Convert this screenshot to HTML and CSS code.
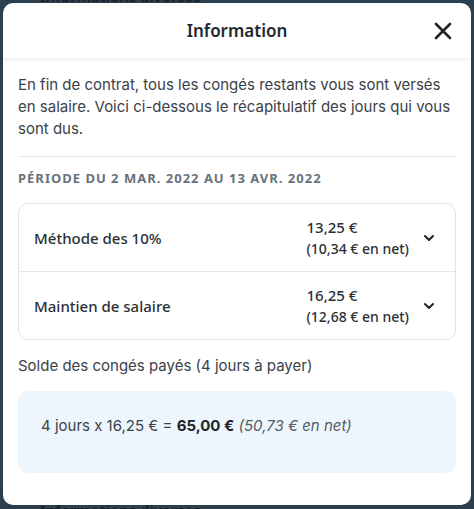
FILE: index.html
```html
<!DOCTYPE html>
<html lang="fr">
<head>
<meta charset="utf-8">
<link rel="stylesheet" href="styles.css">
</head>
<body>
<div class="backdrop">
  <div class="bg-top">Informations diverses</div>
  <div class="bg-bottom">Informations diverses</div>
</div>
<div class="modal">
  <header class="modal-header">
    <h1 class="title">Information</h1>
    <button class="close" aria-label="Fermer">
      <svg width="18" height="18" viewBox="0 0 18 18"><path d="M2 2L16 16M16 2L2 16" stroke="#1f2327" stroke-width="2.6" stroke-linecap="round"/></svg>
    </button>
  </header>
  <div class="modal-body">
    <p class="intro">En fin de contrat, tous les congés restants vous sont versés en salaire. Voici ci-dessous le récapitulatif des jours qui vous sont dus.</p>
    <hr class="divider">
    <h2 class="period">Période du 2 mar. 2022 au 13 avr. 2022</h2>
    <div class="card">
      <div class="row">
        <span class="label">Méthode des 10%</span>
        <span class="amount"><span>13,25 €</span><span>(10,34 € en net)</span></span>
        <svg class="chev" width="12" height="8" viewBox="0 0 12 8"><path d="M2 2L6 6L10 2" fill="none" stroke="#1f2327" stroke-width="2" stroke-linecap="round" stroke-linejoin="round"/></svg>
      </div>
      <div class="row">
        <span class="label">Maintien de salaire</span>
        <span class="amount"><span>16,25 €</span><span>(12,68 € en net)</span></span>
        <svg class="chev" width="12" height="8" viewBox="0 0 12 8"><path d="M2 2L6 6L10 2" fill="none" stroke="#1f2327" stroke-width="2" stroke-linecap="round" stroke-linejoin="round"/></svg>
      </div>
    </div>
    <p class="solde">Solde des congés payés (4 jours à payer)</p>
    <div class="total">4 jours x 16,25 € = <strong>65,00 €</strong> <em>(50,73 € en net)</em></div>
  </div>
</div>
</body>
</html>
```
FILE: styles.css
```css
* { box-sizing: border-box; }
html, body { margin: 0; padding: 0; }
body {
  width: 474px;
  height: 509px;
  background: #2c3f4f;
  font-family: Inter, "Liberation Sans", sans-serif;
  position: relative;
  overflow: hidden;
}
.backdrop { position: absolute; inset: 0; }
.bg-top, .bg-bottom {
  position: absolute;
  left: 40px;
  font-family: "Noto Sans", sans-serif;
  font-size: 15px;
  font-weight: 600;
  color: #15202a;
}
.bg-top { top: -14px; }
.bg-bottom { top: 500px; }
.modal {
  position: absolute;
  left: 3px;
  top: 3px;
  width: 468px;
  height: 502px;
  background: #fff;
  border-radius: 10px;
  overflow: hidden;
}
.modal-header {
  height: 56px;
  display: flex;
  align-items: center;
  justify-content: center;
  position: relative;
  box-shadow: 0 2px 4px rgba(0,0,0,0.05);
  border-bottom: 1px solid #f0f1f3;
}
.title {
  margin: 0;
  font-family: "Noto Sans", sans-serif;
  font-size: 17px;
  font-weight: 600;
  color: #22282e;
  letter-spacing: 0;
}
.close {
  position: absolute;
  right: 19px;
  top: 19px;
  width: 18px;
  height: 18px;
  padding: 0;
  border: 0;
  background: none;
  display: block;
}
.close svg { display: block; }
.modal-body { padding: 15px 15px 0 15px; }
.intro {
  margin: 0;
  font-size: 15px;
  line-height: 22px;
  color: #3b4148;
}
.divider {
  border: 0;
  border-top: 1.5px solid #e4e6e9;
  margin: 16px 0 0 0;
}
.period {
  margin: 12px 0 0 0;
  font-family: "Noto Sans", sans-serif;
  font-size: 13px;
  font-weight: 700;
  text-transform: uppercase;
  letter-spacing: 1px;
  color: #68727c;
  line-height: 18px;
}
.card {
  margin-top: 16px;
  border: 1px solid #e2e5e8;
  border-radius: 10px;
}
.row {
  display: flex;
  align-items: center;
  height: 67px;
  padding: 0 20px 0 15px;
}
.row + .row { border-top: 1px solid #e6e8eb; height: 68px; }
.label {
  flex: 1;
  font-family: "Noto Sans", sans-serif;
  font-size: 15px;
  font-weight: 500;
  color: #2a3036;
}
.amount {
  display: flex;
  flex-direction: column;
  font-family: "Noto Sans", sans-serif;
  font-size: 14px;
  font-weight: 500;
  line-height: 21px;
  color: #2a3036;
  margin-right: 14px;
}
.amount span:first-child { font-size: 15px; }
.chev { display: block; }
.solde {
  margin: 15px 0 0 0;
  font-size: 15px;
  line-height: 22px;
  color: #3b4148;
}
.total {
  margin-top: 14px;
  height: 82px;
  background: #eef6fd;
  border-radius: 10px;
  padding: 24px 23px 0 23px;
  font-size: 15px;
  line-height: 22px;
  color: #3b4148;
}
.total strong { font-weight: 700; color: #1f2429; }
.total em { font-style: italic; color: #555c63; }
```
